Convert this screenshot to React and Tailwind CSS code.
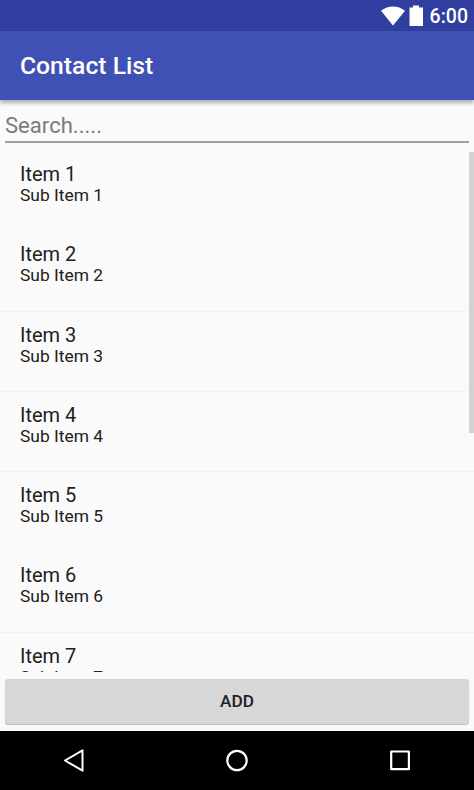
import React, { useState } from "react";
import clsx from "clsx";

const items = [
  { number: 1, divider: false },
  { number: 2, divider: true },
  { number: 3, divider: true },
  { number: 4, divider: true },
  { number: 5, divider: false },
  { number: 6, divider: true },
  { number: 7, divider: false },
];

const App = () => {
  const [search, setSearch] = useState("");

  return (
    <div className="flex h-[790px] w-[474px] flex-col overflow-hidden bg-[#fafafa] font-[Roboto,sans-serif] text-[#212121]">
      <StatusBar />

      <header className="z-10 flex h-[69px] shrink-0 items-center bg-[#4051b5] pl-[20px] shadow-[0_3px_4px_rgba(0,0,0,0.3)]">
        <h1 className="text-[24.7px] leading-[30px] font-medium text-white">
          Contact List
        </h1>
      </header>

      <div className="h-[51px] shrink-0 px-[5px] pt-[9px]">
        <input
          type="text"
          value={search}
          onChange={(e) => setSearch(e.target.value)}
          placeholder="Search....."
          className="block h-[34px] w-full border-b-2 border-[#a0a0a0] bg-transparent text-[22.1px] outline-none placeholder:text-[#7b7b7b]"
        />
      </div>

      <main className="relative h-[521px] shrink-0 overflow-hidden">
        {items.map((item) => (
          <ListItem key={item.number} {...item} />
        ))}
        <div className="absolute top-px right-0 h-[281px] w-[5px] bg-[#d2d2d2]" />
      </main>

      <div className="h-[59px] shrink-0 px-[5px] pt-[7px]">
        <button
          type="button"
          className="block h-[45px] w-full rounded-[3px] bg-[#d7d7d7] text-[17.2px] font-medium shadow-[0_1px_1px_rgba(0,0,0,0.25)]"
        >
          ADD
        </button>
      </div>

      <NavigationBar />
    </div>
  );
};

const StatusBar = () => (
  <div className="flex h-[31px] shrink-0 items-center justify-end bg-[#303f9f] pr-[6px] text-white">
    <svg width="26" height="20" viewBox="0 0 26 20" fill="currentColor">
      <path d="M1 4.8C8-1 18-1 25 4.8L13 19.5Z" />
    </svg>
    <svg
      className="ml-[2px]"
      width="16"
      height="22"
      viewBox="0 0 16 22"
      fill="currentColor"
    >
      <path d="M5 .5h6v2h4v18.500H1.500V2.500H5z" />
    </svg>
    <span className="ml-[6px] pt-[3px] text-[19.5px] leading-[24px] font-medium">
      6:00
    </span>
  </div>
);

const ListItem = ({ number, divider }) => (
  <div
    className={clsx(
      "h-[80.25px] border-b pt-[11px] pl-[20px]",
      divider ? "border-[#f3f3f3]" : "border-transparent"
    )}
  >
    <div className="text-[20px] leading-[24px]">Item {number}</div>
    <div className="-mt-px text-[17.4px] leading-[20px]">
      Sub Item {number}
    </div>
  </div>
);

const NavigationBar = () => (
  <nav className="flex h-[59px] shrink-0 items-center justify-between bg-black px-[62px] text-white">
    <svg
      width="24"
      height="24"
      viewBox="0 0 24 24"
      fill="none"
      stroke="currentColor"
      strokeWidth="2"
      strokeLinejoin="round"
    >
      <path d="M20.500 1.300v20.400L3 11.500z" />
    </svg>
    <svg
      width="24"
      height="24"
      viewBox="0 0 24 24"
      fill="none"
      stroke="currentColor"
      strokeWidth="2.2"
    >
      <circle cx="12" cy="11.500" r="9.700" />
    </svg>
    <svg
      width="24"
      height="24"
      viewBox="0 0 24 24"
      fill="none"
      stroke="currentColor"
      strokeWidth="2.2"
      strokeLinejoin="round"
    >
      <path d="M3.200 2.500h17.700v17.700H3.200z" />
    </svg>
  </nav>
);

export default App;
